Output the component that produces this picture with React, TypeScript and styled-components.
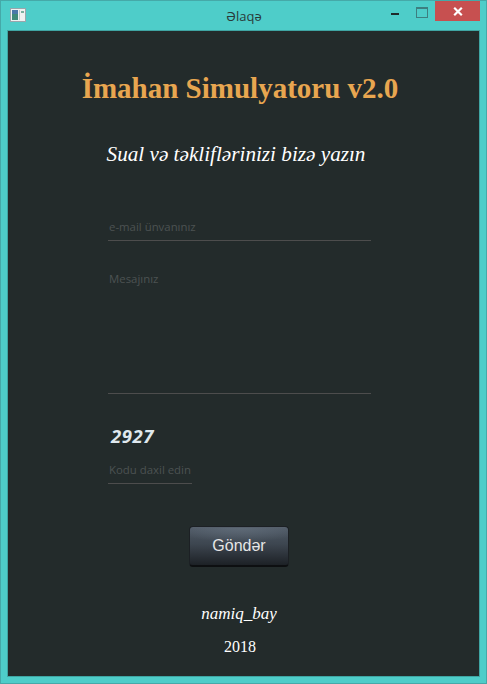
import React from "react";
import styled, { createGlobalStyle } from "styled-components";

const Global = createGlobalStyle`
  html, body { margin: 0; padding: 0; background: #4ecdc9; }
  #root { width: 487px; height: 684px; overflow: hidden; }
  * { box-sizing: border-box; }
`;

const Win = styled.div`
  width: 487px; height: 684px; display: flex; flex-direction: column;
  background: #4ecdc9; border: 1px solid #45a9a8;
`;
const TitleBar = styled.div`
  height: 29px; flex: none; display: flex; align-items: flex-start;
`;
const AppIcon = styled.svg`
  width: 16px; height: 14px; margin: 7px 0 0 9px; flex: none;
`;
const Title = styled.div`
  flex: 1; text-align: center; padding-top: 5px; padding-left: 80px;
  font: 13px/20px "Open Sans", "Noto Sans", sans-serif; color: #2a3a3a;
`;
const Controls = styled.div`
  display: flex; align-items: flex-start; margin-right: 6px; flex: none;
`;
const Min = styled.div`
  width: 26px; height: 20px; display: flex; justify-content: center; padding-top: 12px;
  &::before { content: ""; width: 8px; height: 2px; background: #1f2b2b; }
`;
const Max = styled.div`
  width: 26px; height: 20px; margin-left: 1px; display: flex; justify-content: center; padding-top: 6px;
  &::before { content: ""; width: 10px; height: 8px; border: 1px solid #3d7f80; border-top-width: 2px; }
`;
const Close = styled.div`
  width: 45px; height: 20px; background: #c75050; display: flex; align-items: center; justify-content: center;
`;
const Content = styled.main`
  flex: 1; margin: 0 6px 6px 6px; padding-right: 7px; background: #232b2b; border: 1px solid #3fa5a3;
  display: flex; flex-direction: column; align-items: center; min-height: 0;
`;
const Heading = styled.h1`
  margin: 40px 0 0; font: bold 29px/34px "Liberation Serif", serif; color: #e8a650; text-align: center; white-space: nowrap;
`;
const Sub = styled.h2`
  margin: 35px 8px 0 0; font: italic 21.2px/28px "Liberation Serif", serif; color: #fff; text-align: center;
`;
const Form = styled.form`
  align-self: flex-start; margin: 47px 0 0 100px; display: flex; flex-direction: column; width: 264px;
`;
const Field = styled.input<{ $w?: number }>`
  width: ${p => p.$w ?? 263}px; height: 26px; background: transparent; border: 0; outline: 0;
  border-bottom: 1px solid #4d4d4d; padding: 0 0 2px 1px; color: #ddd;
  font: 11.4px "Open Sans", "Noto Sans", sans-serif;
  &::placeholder { color: #4c5252; opacity: 1; }
`;
const Area = styled.textarea`
  width: 263px; height: 126px; margin-top: 27px; background: transparent; border: 0; outline: 0; resize: none;
  border-bottom: 1px solid #4d4d4d; padding: 3px 0 0 1px; color: #ddd; display: block;
  font: 11.4px/16px "Open Sans", "Noto Sans", sans-serif;
  &::placeholder { color: #4c5252; opacity: 1; }
`;
const Code = styled.div`
  margin: 30px 0 0 3px; font: italic bold 18.5px/24px "Open Sans", sans-serif; color: #dfe8ee; letter-spacing: 0.6px;
`;
const CodeField = styled(Field)`
  margin-top: 10px;
`;
const Send = styled.button`
  width: 100px; height: 41px; margin: 42px 0 0 81px; border-radius: 4px; border: 1px solid #1c2024;
  border-bottom: 2px solid #0d0f11;
  background: radial-gradient(ellipse 70% 40% at 50% 0%, #5f6b78 0%, transparent 100%),
    linear-gradient(#4f5965 0%, #3d4650 45%, #1d2126 100%);
  box-shadow: inset 0 1px 0 #56606c;
  color: #e6e6e6; font: 16px "Liberation Sans", sans-serif; padding: 0;
`;
const Author = styled.div`
  margin: 36px 2px 0 0; font: italic 17px/22px "Liberation Serif", serif; color: #fff;
`;
const Year = styled.div`
  margin-top: 11px; font: 16px/22px "Liberation Serif", serif; color: #fff;
`;

export default function App() {
  return (
    <Win>
      <Global />
      <TitleBar>
        <AppIcon viewBox="0 0 16 14">
          <rect x="0.5" y="0.5" width="15" height="13" fill="#eef2f2" stroke="#9aa6ac" />
          <rect x="2" y="2" width="6" height="10" fill="#3f8a7a" />
          <rect x="2" y="2" width="6" height="4" fill="#4a78a8" />
          <rect x="9" y="2" width="1" height="10" fill="#c4cccc" />
          <rect x="11" y="3" width="3" height="2" fill="#7ab0a0" />
        </AppIcon>
        <Title>Əlaqə</Title>
        <Controls>
          <Min />
          <Max />
          <Close>
            <svg width="10" height="9" viewBox="0 0 10 9">
              <path d="M1.2 0.8 L8.8 8.2 M8.8 0.8 L1.2 8.2" stroke="#fff" strokeWidth="2.2" />
            </svg>
          </Close>
        </Controls>
      </TitleBar>
      <Content>
        <Heading>İmahan Simulyatoru v2.0</Heading>
        <Sub>Sual və təkliflərinizi bizə yazın</Sub>
        <Form onSubmit={e => e.preventDefault()}>
          <Field placeholder="e-mail ünvanınız" />
          <Area placeholder="Mesajınız" />
          <Code>2927</Code>
          <CodeField $w={84} placeholder="Kodu daxil edin" />
          <Send type="button">Göndər</Send>
        </Form>
        <Author>namiq_bay</Author>
        <Year>2018</Year>
      </Content>
    </Win>
  );
}
